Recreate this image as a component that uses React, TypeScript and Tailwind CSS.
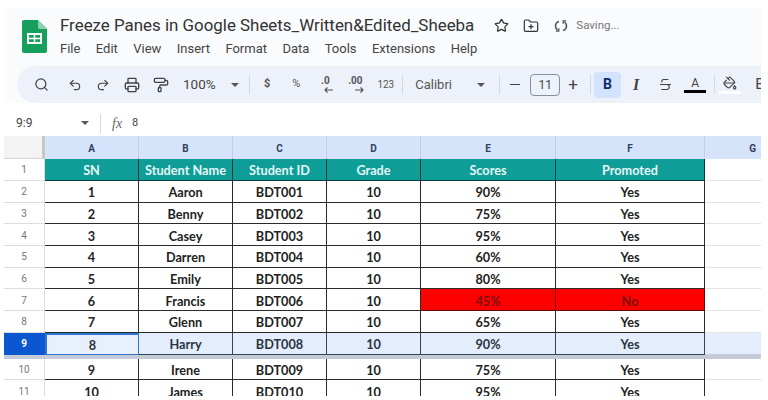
import { Printer, Redo2, Search, Star, Undo2, PaintRoller, Strikethrough, PaintBucket, FolderPlus } from "lucide-react";

const rows = [
  ["1", "Aaron", "BDT001", "10", "90%", "Yes"],
  ["2", "Benny", "BDT002", "10", "75%", "Yes"],
  ["3", "Casey", "BDT003", "10", "95%", "Yes"],
  ["4", "Darren", "BDT004", "10", "60%", "Yes"],
  ["5", "Emily", "BDT005", "10", "80%", "Yes"],
  ["6", "Francis", "BDT006", "10", "45%", "No"],
  ["7", "Glenn", "BDT007", "10", "65%", "Yes"],
  ["8", "Harry", "BDT008", "10", "90%", "Yes"],
  ["9", "Irene", "BDT009", "10", "75%", "Yes"],
  ["10", "James", "BDT010", "10", "95%", "Yes"],
];

const letters = ["A", "B", "C", "D", "E", "F"];
const headings = ["SN", "Student Name", "Student ID", "Grade", "Scores", "Promoted"];

function SheetsLogo() {
  return (
    <svg width="25" height="33" viewBox="0 0 25 33" aria-hidden>
      <path d="M2 0h14l9 9v22a2 2 0 0 1-2 2H2a2 2 0 0 1-2-2V2a2 2 0 0 1 2-2z" fill="#16a05d" />
      <path d="M16 0l9 9h-7a2 2 0 0 1-2-2z" fill="#8ed1b1" />
      <path d="M6 14h13v9H6z" fill="none" stroke="#fff" strokeWidth="2" />
      <path d="M6 18.500h13M12.500 14v9" stroke="#fff" strokeWidth="1.500" />
    </svg>
  );
}

// the "saving" arcs next to the title
function SyncArcs() {
  return (
    <svg width="14" height="14" viewBox="0 0 14 14" fill="none" stroke="#555" strokeWidth="1.600" className="ml-[15px]" aria-hidden>
      <path d="M5 2.500C2.600 3.200 1.500 5 1.500 7c0 1.700.8 3 2 4" />
      <path d="M1.800 12.200h3v-3" strokeWidth="1.300" />
      <path d="M9 11.500c2.400-.7 3.500-2.500 3.500-4.500 0-1.700-.8-3-2-4" />
      <path d="M12.200 1.800h-3v3" strokeWidth="1.300" />
    </svg>
  );
}

function Caret() {
  return <span className="h-0 w-0 border-x-[4px] border-t-[4px] border-x-transparent border-t-[#555]" />;
}

function Divider() {
  return <span className="h-[19px] w-px bg-[#d5d9df]" />;
}

function DecimalIcon({ label, dir }: { label: string; dir: "left" | "right" }) {
  return (
    <span className="flex h-5 w-[24px] flex-col items-center text-[10px] font-bold leading-[12px] text-[#555]">
      {label}
      <svg width="9" height="6" viewBox="0 0 9 6" fill="none" stroke="#555" strokeWidth="1.200" className={dir === "left" ? "ml-[6px]" : "ml-[8px]"} aria-hidden>
        {dir === "left" ? <path d="M9 3H1M3.500.5L1 3l2.500 2.500" /> : <path d="M0 3h8M5.500.5L8 3 5.500 5.500" />}
      </svg>
    </span>
  );
}

function Toolbar() {
  return (
    <div className="ml-[13px] flex h-[37px] items-center overflow-hidden rounded-l-[18px] bg-[#edf2fa] pl-[17px] text-[#444] [&>*]:shrink-0">
      <Search size={15} strokeWidth={2} />
      <Undo2 size={14} strokeWidth={2} className="ml-[19px]" />
      <Redo2 size={14} strokeWidth={2} className="ml-[14px]" />
      <Printer size={16} strokeWidth={2} className="ml-[14px]" />
      <PaintRoller size={16} strokeWidth={2} className="ml-[13px]" />
      <span className="ml-[14px] w-[36px] text-[13.500px]">100%</span>
      <span className="ml-[12px] flex"><Caret /></span>
      <span className="ml-[10px] flex"><Divider /></span>
      <span className="ml-[14px] text-[11px] font-bold text-[#555]">$</span>
      <span className="ml-[22px] text-[11px] text-[#555]">%</span>
      <span className="ml-[13px] flex"><DecimalIcon label=".0" dir="left" /></span>
      <span className="ml-[6px] flex"><DecimalIcon label=".00" dir="right" /></span>
      <span className="ml-[10px] text-[10px] text-[#555]">123</span>
      <span className="ml-[8px] flex"><Divider /></span>
      <span className="ml-[12px] w-[42px] text-[13px] text-[#555]">Calibri</span>
      <span className="ml-[20px] flex"><Caret /></span>
      <span className="ml-[14px] flex"><Divider /></span>
      <span className="ml-[10px] h-[1.500px] w-[10px] bg-[#444]" />
      <span className="ml-[10px] flex h-[22px] w-[30px] items-center justify-center rounded-[4px] border border-[#8a8f96] text-[12px]">11</span>
      <span className="ml-[8px] text-[17px] leading-none">+</span>
      <span className="ml-[12px] flex"><Divider /></span>
      <span className="ml-[3px] flex h-[26px] w-[27px] items-center justify-center rounded-[4px] bg-[#d3e3fd] text-[14px] font-bold text-[#0b2f6b]">B</span>
      <span className="ml-[12px] font-['Liberation_Serif',serif] text-[16px] font-bold italic text-[#444]">I</span>
      <Strikethrough size={15} strokeWidth={1.800} className="ml-[19px]" />
      <span className="ml-[11px] flex w-[22px] flex-col items-center">
        <span className="text-[12px] leading-[13px]">A</span>
        <span className="h-[3px] w-[22px] bg-black" />
      </span>
      <span className="ml-[8px] flex"><Divider /></span>
      <span className="ml-[4px] flex w-[22px] flex-col items-center">
        <PaintBucket size={14} strokeWidth={2} />
        <span className="mt-[1px] h-[3px] w-[22px] bg-white" />
      </span>
      <span className="ml-[14px] text-[15px]">E</span>
    </div>
  );
}

function Grid() {
  return (
    <div className="grid grid-cols-[41px_94px_94px_94px_94px_135px_149px_56px] bg-white font-['Lato',sans-serif] text-[12.700px] font-bold text-[#222]">
      <div className="h-[23px] border-r-[3px] border-b border-r-[#c7c7c7] border-b-[#d5d5d5] bg-[#f3f3f3]" />
      {letters.map((l) => (
        <div key={l} className="flex h-[23px] items-center justify-center border-r border-[#c4cede] bg-[#d6e4fb] pt-[1px] font-['Roboto',sans-serif] text-[10px] font-bold text-[#33415c]">
          {l}
        </div>
      ))}
      <div className="flex h-[23px] items-center justify-end bg-[#d6e4fb] pt-[1px] pr-[5px] font-['Roboto',sans-serif] text-[10px] font-bold text-[#33415c]">
        G
      </div>

      <RowHead n={1} />
      {headings.map((h) => (
        <div key={h} className="flex h-[22px] items-center justify-center border-r-[1.500px] border-b-[1.500px] border-[#0c3b3b] bg-[#0f9d98] pt-[3px] text-[#e4f7f5]">
          {h}
        </div>
      ))}
      <div className="border-b border-[#e4e4e4]" />

      {rows.map((row, i) => {
        const n = i + 2;
        const selected = n === 9;
        const failed = n === 7;
        return (
          <div key={n} className="contents">
            <RowHead n={n} selected={selected} />
            {row.map((cell, c) => (
              <div
                key={c}
                className={`flex h-[21.700px] items-center justify-center border-r-[1.500px] border-b-[1.500px] pt-[3px] ${
                  failed && c >= 4
                    ? "border-[#5d0a0a] bg-[#ff0000] text-[#7a0f0f]"
                    : selected
                      ? c === 0
                        ? "border-2 border-[#2f74d0] bg-[#e8f0fe] text-[#333]"
                        : "border-[#33445c] bg-[#e3edfb] text-[#2b3443]"
                      : "border-[#2a2a2a]"
                }`}
              >
                {cell}
              </div>
            ))}
            <div className={`border-b ${selected ? "border-[#c4cdda] bg-[#e3edfb]" : "border-[#e4e4e4]"}`} />
            {selected && <div className="col-span-full h-[4px] bg-[#c4cbd6]" />}
          </div>
        );
      })}
    </div>
  );
}

function RowHead({ n, selected = false }: { n: number; selected?: boolean }) {
  return (
    <div
      className={`flex h-[21.700px] items-center justify-center border-r border-b pt-[1px] font-['Roboto',sans-serif] text-[10px] ${
        selected ? "border-[#0b57d0] bg-[#0b57d0] font-bold text-white" : "border-[#dcdcdc] font-normal text-[#777]"
      }`}
    >
      {n}
    </div>
  );
}

export default function App() {
  return (
    <div className="h-[400px] w-[768px] overflow-hidden bg-white pt-2 pl-1 font-['Roboto',sans-serif]">
      <div className="h-[388px] w-[757px] overflow-hidden bg-[#f9fbfd]">
        <div className="flex h-[58px]">
          <div className="ml-[18px] mt-[12px]">
            <SheetsLogo />
          </div>
          <div className="ml-[13px] mt-[6px] flex flex-col">
            <div className="flex h-[23px] items-center text-[#333]">
              <span className="text-[16.900px] leading-none">Freeze Panes in Google Sheets_Written&amp;Edited_Sheeba</span>
              <Star size={15} strokeWidth={2} className="ml-[20px]" />
              <FolderPlus size={16} strokeWidth={1.800} className="ml-[14px]" />
              <SyncArcs />
              <span className="ml-[8px] text-[11.500px] text-[#777]">Saving...</span>
            </div>
            <div className="mt-[2px] flex gap-[15.400px] text-[13px] text-[#444]">
              {["File", "Edit", "View", "Insert", "Format", "Data", "Tools", "Extensions", "Help"].map((m) => (
                <span key={m}>{m}</span>
              ))}
            </div>
          </div>
        </div>
        <Toolbar />
        <div className="flex h-[33px] items-center bg-white pt-[7px] pl-[12px] text-[12px] text-[#444]">
          <span className="w-[65px]">9:9</span>
          <Caret />
          <span className="ml-[11px] flex"><Divider /></span>
          <span className="ml-[11px] font-['Liberation_Serif',serif] text-[14px] italic text-[#666]">fx</span>
          <span className="ml-[10px] text-[11px]">8</span>
        </div>
        <Grid />
      </div>
    </div>
  );
}
